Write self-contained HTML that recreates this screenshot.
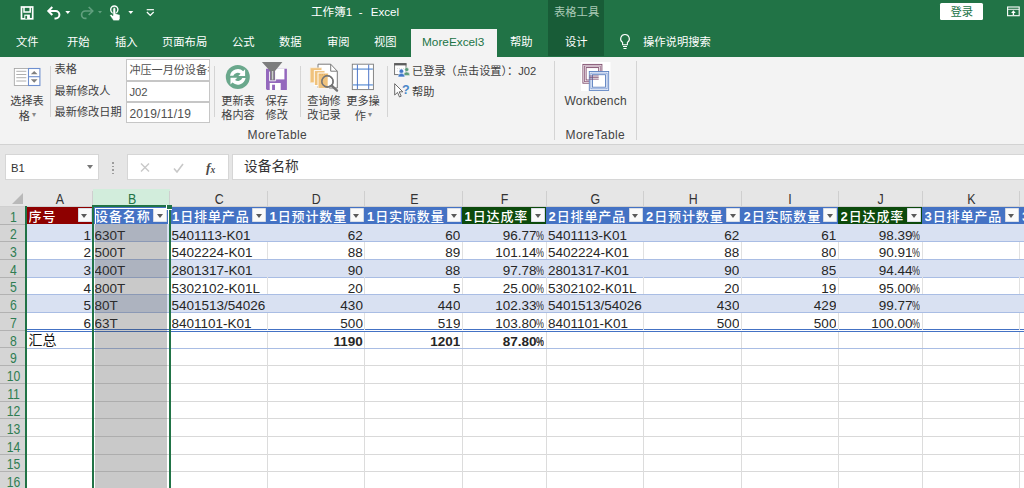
<!DOCTYPE html><html lang="zh-CN"><head><meta charset="utf-8"><title>工作簿1 - Excel</title><style>
*{box-sizing:border-box;margin:0;padding:0}
html,body{width:1024px;height:488px;overflow:hidden;background:#e6e6e6}
body{position:relative;font-family:"Liberation Sans","Noto Sans CJK SC",sans-serif;font-size:12px;color:#262626}
.abs{position:absolute}
.t{position:absolute;white-space:nowrap;line-height:1}
#title{left:0;top:0;width:1024px;height:56.5px;background:#217346}
.tab{position:absolute;top:34.5px;color:#fff;font-size:11.3px;line-height:14px;white-space:nowrap}
#ribbon{left:0;top:56.5px;width:1024px;height:88.4px;background:#f3f3f3;border-bottom:1px solid #d2d2d2}
.rl{position:absolute;font-size:11.2px;line-height:13px;white-space:nowrap;color:#404040}
.inp{position:absolute;left:126.4px;width:83.4px;height:21.8px;background:#fff;border:1px solid #c6c6c6;font-size:11.1px;line-height:20px;padding-left:2px;white-space:nowrap;overflow:hidden;color:#505050}
.sep{position:absolute;width:1px;background:#d4d4d4}
.cell{position:absolute;white-space:nowrap;overflow:hidden;font-family:"Liberation Sans","Noto Sans CJK SC",sans-serif;font-size:13.5px;line-height:17.7px;color:#262626;height:17.7px;letter-spacing:0}
.hdr{color:#fff;font-weight:500;font-size:13px;letter-spacing:0.9px}
.hdr b{font-weight:700}
.cj{font-size:14px}
.pc{display:inline-block;transform:scaleX(0.66);transform-origin:100% 50%;margin-left:-4.2px;letter-spacing:0}
.ch{position:absolute;top:189px;height:17.5px;text-align:center;font-size:14.4px;line-height:21.4px;transform:scaleX(0.86);padding-left:1.4px;color:#333;font-family:"Liberation Sans",sans-serif}
.rn{position:absolute;left:0.8px;width:25px;letter-spacing:0;transform:scaleX(0.86);text-align:center;font-size:14.2px;line-height:17.7px;padding-top:2.4px;color:#2f7d52;font-family:"Liberation Sans",sans-serif;height:17.7px}
.fb{position:absolute;width:14px;height:14px;background:#fafafa;box-shadow:inset 0 0 0 0.6px #b9c3d6}
.fb:after{content:"";position:absolute;left:3.5px;top:5.5px;width:0;height:0;box-sizing:content-box;border-left:3.5px solid transparent;border-right:3.5px solid transparent;border-top:4px solid #5a5a5a}
</style></head><body>
<div id="title" class="abs"></div>
<div class="abs" style="left:548px;top:0;width:56px;height:56px;background:#185c37"></div>
<div class="t" style="left:311px;top:4.6px;color:#fff;font-size:11.6px;line-height:14px">工作簿1&nbsp; -&nbsp;&nbsp;<span style="letter-spacing:0;margin-left:1.8px">Excel</span></div>
<div class="t" style="left:554px;top:4.6px;color:#a9cab6;font-size:11.3px;line-height:14px">表格工具</div>
<div class="abs" style="left:940.4px;top:2.9px;width:42.7px;height:17.3px;border-radius:1.5px;background:#fff;color:#217346;font-size:11.3px;line-height:18.6px;text-align:center">登录</div>
<svg class="abs" style="left:0;top:0" width="170" height="28" viewBox="0 0 170 28">
<g fill="none" stroke="#fff">
<rect x="21.500" y="7" width="11.200" height="11.800" stroke-width="1.700"/>
<path d="M24 7 v5 h6.200 v-5" stroke-width="1.500"/>
<rect x="24.300" y="14.600" width="5.600" height="4.200" fill="#fff" stroke="none"/>
<rect x="25.300" y="15.800" width="1.800" height="3" fill="#217346" stroke="none"/>
<path d="M48.500 11 h7.200 a3.700 3.700 0 0 1 0 7.400 h-1.200" stroke-width="2"/>
<path d="M52.300 7 l-4 4 4 4" stroke-width="2"/>
</g>
<path d="M65.300 11 h5 l-2.500 3z" fill="#fff"/>
<g fill="none" stroke="#62a07f" stroke-width="1.700">
<path d="M92.300 11 h-7 a3.700 3.700 0 0 0 0 7.400 h1.200"/>
<path d="M88.700 7 l4 4 -4 4"/>
</g>
<path d="M98 11 h4 l-2 2.500z" fill="#62a07f"/>
<g fill="#fff">
<circle cx="114.300" cy="9.600" r="3.600" fill="none" stroke="#fff" stroke-width="1.400"/>
<path d="M112.900 9 a1.400 1.400 0 0 1 2.800 0 v4.500 l4.300 1.200 v4 l-1 2 h-5.500 l-3.800 -5.300 1.400 -1.200 1.800 1.500z" stroke="#217346" stroke-width="0.600"/>
<path d="M128.300 11 h5 l-2.500 3z"/>
</g>
<path d="M146.700 9.700 h7.200" stroke="#fff" stroke-width="1.200"/>
<path d="M146.900 12 l3.400 3.400 3.400 -3.400" stroke="#fff" stroke-width="1.300" fill="none"/>
</svg>
<svg class="abs" style="left:1004px;top:4px" width="20" height="16" viewBox="0 0 20 16"><rect x="3.600" y="3" width="11.600" height="8.700" fill="none" stroke="#fff" stroke-width="1.100"/><path d="M3.600 5.300 h11.600" stroke="#fff" stroke-width="0.900"/><path d="M9.400 6.300 l-2.300 2.600 h1.600 v2 h1.400 v-2 h1.600z" fill="#fff"/></svg>
<div class="tab" style="left:16px">文件</div>
<div class="tab" style="left:67px">开始</div>
<div class="tab" style="left:115px">插入</div>
<div class="tab" style="left:162px">页面布局</div>
<div class="tab" style="left:232px">公式</div>
<div class="tab" style="left:279px">数据</div>
<div class="tab" style="left:327px">审阅</div>
<div class="tab" style="left:374px">视图</div>
<div class="abs" style="left:411px;top:29px;width:86.2px;height:28px;background:#f3f3f3"></div>
<div class="tab" style="left:422px;color:#217346;font-size:11.8px;letter-spacing:0">MoreExcel3</div>
<div class="tab" style="left:510px">帮助</div>
<div class="tab" style="left:565px">设计</div>
<div class="tab" style="left:643px">操作说明搜索</div>
<svg class="abs" style="left:618px;top:33px" width="14" height="18" viewBox="0 0 14 18"><path d="M7 1.5 a4.3 4.3 0 0 0 -2.4 7.9 v2.4 h4.8 v-2.4 a4.3 4.3 0 0 0 -2.4 -7.9z" fill="none" stroke="#fff" stroke-width="1.1"/><path d="M5 13.5 h4 M5.5 15.5 h3" stroke="#fff" stroke-width="1.1"/></svg>
<div id="ribbon" class="abs"></div>
<svg class="abs" style="left:12px;top:64px" width="32" height="28" viewBox="0 0 32 28">
<rect x="2.300" y="4.500" width="14.200" height="17" fill="#fff" stroke="#a0a0a0" stroke-width="0.800"/>
<path d="M4.300 7.300 h10 M4.300 10.500 h10 M4.300 13.700 h10 M4.300 17 h10" stroke="#9a9a9a" stroke-width="0.800"/>
<rect x="16.500" y="4.500" width="11.400" height="17" fill="#fff" stroke="#6e8fcf" stroke-width="1.100"/>
<path d="M16.500 12.700 h11.400" stroke="#6e8fcf" stroke-width="1.100"/>
<path d="M18.800 10.300 l3.400 -3.400 3.400 3.400z M18.800 15.300 l3.400 3.400 3.400 -3.400z" fill="#808080"/>
</svg>
<div class="rl" style="left:8px;top:93.6px;width:38px;text-align:center;line-height:14px">选择表<br>格<span style="font-size:8px;color:#888;vertical-align:2.5px;margin-right:-1px">&nbsp;&#9662;</span></div>
<div class="sep" style="left:50px;top:66px;height:51px"></div>
<div class="rl" style="left:54.5px;top:62.8px">表格</div>
<div class="rl" style="left:54.5px;top:85px">最新修改人</div>
<div class="rl" style="left:54.5px;top:106px">最新修改日期</div>
<div class="inp" style="top:59.3px">冲压一月份设备名</div>
<div class="inp" style="top:80.5px;font-size:11.3px">J02</div>
<div class="inp" style="top:101.7px;font-size:12px;letter-spacing:0.25px;line-height:22px">2019/11/19</div>
<div class="sep" style="left:214px;top:66px;height:51px"></div>
<svg class="abs" style="left:224px;top:62px" width="28" height="30" viewBox="0 0 28 30">
<circle cx="13.800" cy="14.900" r="12" fill="#6aa88c"/>
<path d="M6 13.800 a8 8 0 0 1 13.200 -4.600 l1.900 -1.900 v6.800 h-6.800 l2.300 -2.300 a4.700 4.700 0 0 0 -7.300 2z" fill="#fff"/>
<path d="M21.600 16 a8 8 0 0 1 -13.200 4.600 l-1.900 1.900 v-6.800 h6.800 l-2.300 2.300 a4.700 4.700 0 0 0 7.300 -2z" fill="#fff"/>
</svg>
<div class="rl" style="left:216px;top:93.9px;width:44px;text-align:center;line-height:14px">更新表<br>格内容</div>
<svg class="abs" style="left:260px;top:60px" width="30" height="32" viewBox="0 0 30 32">
<path d="M6 8.700 h20.900 v21.300 h-19.900 l-1 -1z" fill="#9468bd"/>
<rect x="15" y="8.700" width="9.400" height="10.700" fill="#fff"/>
<rect x="9.700" y="23" width="11" height="7" fill="#fff"/>
<rect x="12.100" y="24.700" width="2.900" height="5.300" fill="#9468bd"/>
<path d="M1.900 2.100 h20.500 l-7.800 9.500 v8.600 h-4.100 v-8.600z" fill="#7d7d7d"/>
<path d="M12.550 11 v8.600" stroke="#cfcfcf" stroke-width="1.400"/>
<path d="M9.500 11.600 v9.200 h6.100 v-9.200" fill="none" stroke="#f3f3f3" stroke-width="0.900"/>
</svg>
<div class="rl" style="left:260.7px;top:93.9px;width:32px;text-align:center;line-height:14px">保存<br>修改</div>
<div class="sep" style="left:300px;top:66px;height:51px"></div>
<svg class="abs" style="left:306px;top:61px" width="36" height="32" viewBox="0 0 36 32">
<path d="M12 3.200 h12.700 l6.600 7 v16.800 h-19.300z" fill="#fff" stroke="#7a7a7a" stroke-width="1"/>
<path d="M24.700 3.200 v7 h6.600" fill="none" stroke="#7a7a7a" stroke-width="1"/>
<rect x="4.200" y="6.900" width="11.500" height="14.700" fill="#f0c27c" stroke="#fbe9cd" stroke-width="0.600"/>
<rect x="8.300" y="9.600" width="10.700" height="14.900" fill="#f0c27c" stroke="#fff" stroke-width="0.900"/>
<rect x="12" y="12" width="10.700" height="15.400" fill="#f0c27c" stroke="#fff" stroke-width="0.900"/>
<path d="M13.500 13.800 h8" stroke="#d9a457" stroke-width="0.900" stroke-dasharray="1.200 1"/>
<circle cx="21.500" cy="20.400" r="5.600" fill="#fff" stroke="#757575" stroke-width="1.400"/>
<path d="M18.700 15.900 a5 5 0 0 0 0 9 h3 v-9.500z" fill="#f0c27c"/>
<circle cx="21.500" cy="20.400" r="5.600" fill="none" stroke="#757575" stroke-width="1.400"/>
<path d="M26 24.900 l5 4.700" stroke="#757575" stroke-width="2.400" stroke-linecap="round"/>
</svg>
<div class="rl" style="left:302px;top:93.9px;width:44px;text-align:center;line-height:14px">查询修<br>改记录</div>
<svg class="abs" style="left:349px;top:61px" width="28" height="32" viewBox="0 0 28 32">
<rect x="3.300" y="3.200" width="21.100" height="25.400" fill="#fff" stroke="#7a7a7a" stroke-width="0.900"/>
<path d="M3.800 8.100 h20.100 M3.800 23.850 h20.100" stroke="#8fb2e2" stroke-width="1.700" fill="none"/>
<path d="M8.400 3.700 v24.400 M19.700 3.700 v24.400" stroke="#4d76c8" stroke-width="1" fill="none"/>
</svg>
<div class="rl" style="left:342px;top:93.9px;width:42px;text-align:center;line-height:14px">更多操<br>作<span style="font-size:8px;color:#888;vertical-align:2.5px;margin-right:-1px">&nbsp;&#9662;</span></div>
<div class="sep" style="left:387px;top:66px;height:51px"></div>
<div class="rl" style="left:247.5px;top:128.5px;font-size:12px;letter-spacing:0.4px;color:#444">MoreTable</div>
<svg class="abs" style="left:393px;top:62px" width="18" height="16" viewBox="0 0 18 16">
<rect x="1.600" y="1.600" width="11.400" height="11" fill="#fff" stroke="#6a6a6a" stroke-width="0.900"/>
<rect x="1.200" y="1.200" width="12.200" height="2.200" fill="#5c5c5c"/>
<path d="M4 6.500 h7 M4 9 h3" stroke="#d8d8d8" stroke-width="0.800" stroke-dasharray="1 1"/>
<circle cx="13.700" cy="7.600" r="2" fill="#5a9b78" stroke="#f3f3f3" stroke-width="0.500"/><path d="M10.600 13.400 a3.100 3.400 0 0 1 6.200 0z" fill="#5a9b78" stroke="#f3f3f3" stroke-width="0.500"/>
<circle cx="8.400" cy="9.200" r="2.200" fill="#3f78c8" stroke="#fff" stroke-width="0.500"/><path d="M5 14.900 a3.400 3.600 0 0 1 6.800 0z" fill="#3f78c8" stroke="#fff" stroke-width="0.500"/>
</svg>
<div class="rl" style="left:412px;top:64.5px">已登录（点击设置）：J02</div>
<svg class="abs" style="left:393px;top:81px" width="18" height="18" viewBox="0 0 18 18">
<path d="M1.700 2.700 v11.300 l2.800 -2.600 2 4.600 1.700 -0.800 -2 -4.400 h3.600z" fill="#fff" stroke="#5a5a5a" stroke-width="0.900" stroke-linejoin="round"/>
<text x="9" y="12.800" font-family="Liberation Sans,sans-serif" font-weight="bold" font-size="12.500" fill="#4a86c8">?</text>
</svg>
<div class="rl" style="left:412px;top:86px">帮助</div>
<div class="sep" style="left:554px;top:61px;height:79px"></div>
<svg class="abs" style="left:581px;top:61.500px" width="29.500" height="29.500" viewBox="0 0 29.5 29.5">
<rect width="29.500" height="29.500" fill="#fff"/>
<g fill="none" stroke-width="0.900">
<rect x="1.900" y="2.400" width="19" height="18.800" stroke="#7d4a6a"/>
<rect x="3.500" y="4" width="15.800" height="15.600" stroke="#9a6a88"/>
<rect x="5.100" y="5.600" width="12.600" height="12.400" stroke="#7d4a6a"/>
<rect x="8.300" y="9.500" width="19.400" height="18.900" stroke="#5a7fc0" fill="#fff"/>
<rect x="9.900" y="11.100" width="16.200" height="15.700" stroke="#7a9ad6"/>
<rect x="11.500" y="12.700" width="13" height="12.500" stroke="#5a7fc0"/>
<path d="M8.300 14 h9.400 M8.300 15.600 h9.400 M8.300 17.200 h9.400" stroke="#7d4a6a" stroke-width="0.800"/>
</g></svg>
<div class="rl" style="left:564.5px;top:95px;font-size:12px;letter-spacing:0.2px;color:#444">Workbench</div>
<div class="rl" style="left:565.5px;top:128.5px;font-size:12px;letter-spacing:0.4px;color:#444">MoreTable</div>
<div class="sep" style="left:636px;top:61px;height:79px"></div>
<div class="abs" style="left:5px;top:154px;width:94px;height:26px;background:#fff;border:1px solid #d6d6d6"></div>
<div class="t" style="left:11px;top:162.5px;font-size:11.3px;color:#333">B1</div>
<div class="abs" style="left:87px;top:165px;border-left:3.5px solid transparent;border-right:3.5px solid transparent;border-top:4px solid #777"></div>
<div class="abs" style="left:112.3px;top:161.5px;width:1.6px;height:12px;background:repeating-linear-gradient(#9c9c9c 0 1.5px,transparent 1.5px 3.5px)"></div>
<div class="abs" style="left:127px;top:154px;width:102px;height:26px;background:#fff;border:1px solid #d6d6d6"></div>
<svg class="abs" style="left:127px;top:154px" width="102" height="26" viewBox="0 0 102 26">
<path d="M14 9.5 l8 8 M22 9.5 l-8 8" stroke="#c8c8c8" stroke-width="1.4" fill="none"/>
<path d="M47 14.5 l3 3.5 6-8" stroke="#c8c8c8" stroke-width="1.6" fill="none"/>
<text x="79" y="18" font-family="Liberation Serif,serif" font-style="italic" font-size="13.500" font-weight="bold" fill="#4a4a4a">f</text>
<text x="83.500" y="18.500" font-family="Liberation Serif,serif" font-style="italic" font-size="9.500" font-weight="bold" fill="#4a4a4a">x</text>
</svg>
<div class="abs" style="left:232px;top:154px;width:800px;height:26px;background:#fff;border:1px solid #d6d6d6"></div>
<div class="t" style="left:244px;top:160px;font-size:13.7px;color:#333;line-height:14px">设备名称</div>
<div class="abs" style="left:0;top:189px;width:1024px;height:300px;background:#fff"></div>
<div class="abs" style="left:0;top:189px;width:1024px;height:17.3px;background:#e6e6e6"></div>
<div class="abs" style="left:0;top:189px;width:26px;height:300px;background:#e6e6e6"></div>
<div class="abs" style="left:0;top:206.5px;width:26px;height:300px;background:#d5d5d5"></div>
<div class="abs" style="left:92.5px;top:189px;width:77px;height:17.3px;background:#d2eddc"></div>
<div class="abs" style="left:11.5px;top:193px;width:0;height:0;border-left:11px solid transparent;border-bottom:11px solid #b9b9b9"></div>
<div class="ch" style="left:26px;width:66.5px;color:#333">A</div>
<div class="abs" style="left:92.0px;top:191px;width:1px;height:15px;background:#cfcfcf"></div>
<div class="ch" style="left:92.5px;width:77.0px;color:#217346">B</div>
<div class="abs" style="left:169.0px;top:191px;width:1px;height:15px;background:#cfcfcf"></div>
<div class="ch" style="left:169.5px;width:97.5px;color:#333">C</div>
<div class="abs" style="left:266.5px;top:191px;width:1px;height:15px;background:#cfcfcf"></div>
<div class="ch" style="left:267px;width:97.5px;color:#333">D</div>
<div class="abs" style="left:364.0px;top:191px;width:1px;height:15px;background:#cfcfcf"></div>
<div class="ch" style="left:364.5px;width:97.5px;color:#333">E</div>
<div class="abs" style="left:461.5px;top:191px;width:1px;height:15px;background:#cfcfcf"></div>
<div class="ch" style="left:462px;width:84px;color:#333">F</div>
<div class="abs" style="left:545.5px;top:191px;width:1px;height:15px;background:#cfcfcf"></div>
<div class="ch" style="left:546px;width:97.5px;color:#333">G</div>
<div class="abs" style="left:643.0px;top:191px;width:1px;height:15px;background:#cfcfcf"></div>
<div class="ch" style="left:643.5px;width:97.5px;color:#333">H</div>
<div class="abs" style="left:740.5px;top:191px;width:1px;height:15px;background:#cfcfcf"></div>
<div class="ch" style="left:741px;width:97px;color:#333">I</div>
<div class="abs" style="left:837.5px;top:191px;width:1px;height:15px;background:#cfcfcf"></div>
<div class="ch" style="left:838px;width:84px;color:#333">J</div>
<div class="abs" style="left:921.5px;top:191px;width:1px;height:15px;background:#cfcfcf"></div>
<div class="ch" style="left:922px;width:97.5px;color:#333">K</div>
<div class="abs" style="left:1019.0px;top:191px;width:1px;height:15px;background:#cfcfcf"></div>
<div class="abs" style="left:1029.5px;top:191px;width:1px;height:15px;background:#cfcfcf"></div>
<div class="rn" style="top:206.30px">1</div>
<div class="abs" style="left:0;top:223.50px;width:26px;height:1px;background:#b2b2b2"></div>
<div class="rn" style="top:224.00px">2</div>
<div class="abs" style="left:0;top:241.20px;width:26px;height:1px;background:#b2b2b2"></div>
<div class="rn" style="top:241.70px">3</div>
<div class="abs" style="left:0;top:258.90px;width:26px;height:1px;background:#b2b2b2"></div>
<div class="rn" style="top:259.40px">4</div>
<div class="abs" style="left:0;top:276.60px;width:26px;height:1px;background:#b2b2b2"></div>
<div class="rn" style="top:277.10px">5</div>
<div class="abs" style="left:0;top:294.30px;width:26px;height:1px;background:#b2b2b2"></div>
<div class="rn" style="top:294.80px">6</div>
<div class="abs" style="left:0;top:312.00px;width:26px;height:1px;background:#b2b2b2"></div>
<div class="rn" style="top:312.50px">7</div>
<div class="abs" style="left:0;top:329.70px;width:26px;height:1px;background:#b2b2b2"></div>
<div class="rn" style="top:330.20px">8</div>
<div class="abs" style="left:0;top:347.40px;width:26px;height:1px;background:#b2b2b2"></div>
<div class="rn" style="top:347.90px">9</div>
<div class="abs" style="left:0;top:365.10px;width:26px;height:1px;background:#b2b2b2"></div>
<div class="abs" style="left:26px;top:365.10px;width:998px;height:1px;background:#d9d9d9"></div>
<div class="rn" style="top:365.60px">10</div>
<div class="abs" style="left:0;top:382.80px;width:26px;height:1px;background:#b2b2b2"></div>
<div class="abs" style="left:26px;top:382.80px;width:998px;height:1px;background:#d9d9d9"></div>
<div class="rn" style="top:383.30px">11</div>
<div class="abs" style="left:0;top:400.50px;width:26px;height:1px;background:#b2b2b2"></div>
<div class="abs" style="left:26px;top:400.50px;width:998px;height:1px;background:#d9d9d9"></div>
<div class="rn" style="top:401.00px">12</div>
<div class="abs" style="left:0;top:418.20px;width:26px;height:1px;background:#b2b2b2"></div>
<div class="abs" style="left:26px;top:418.20px;width:998px;height:1px;background:#d9d9d9"></div>
<div class="rn" style="top:418.70px">13</div>
<div class="abs" style="left:0;top:435.90px;width:26px;height:1px;background:#b2b2b2"></div>
<div class="abs" style="left:26px;top:435.90px;width:998px;height:1px;background:#d9d9d9"></div>
<div class="rn" style="top:436.40px">14</div>
<div class="abs" style="left:0;top:453.60px;width:26px;height:1px;background:#b2b2b2"></div>
<div class="abs" style="left:26px;top:453.60px;width:998px;height:1px;background:#d9d9d9"></div>
<div class="rn" style="top:454.10px">15</div>
<div class="abs" style="left:0;top:471.30px;width:26px;height:1px;background:#b2b2b2"></div>
<div class="abs" style="left:26px;top:471.30px;width:998px;height:1px;background:#d9d9d9"></div>
<div class="rn" style="top:471.80px">16</div>
<div class="abs" style="left:0;top:489.00px;width:26px;height:1px;background:#b2b2b2"></div>
<div class="abs" style="left:26px;top:489.00px;width:998px;height:1px;background:#d9d9d9"></div>
<div class="rn" style="top:489.50px">17</div>
<div class="abs" style="left:0;top:506.70px;width:26px;height:1px;background:#b2b2b2"></div>
<div class="abs" style="left:26px;top:506.70px;width:998px;height:1px;background:#d9d9d9"></div>
<div class="abs" style="left:92.0px;top:330.20px;width:1px;height:160px;background:#dcdcdc"></div>
<div class="abs" style="left:169.0px;top:330.20px;width:1px;height:160px;background:#dcdcdc"></div>
<div class="abs" style="left:266.5px;top:330.20px;width:1px;height:160px;background:#dcdcdc"></div>
<div class="abs" style="left:364.0px;top:330.20px;width:1px;height:160px;background:#dcdcdc"></div>
<div class="abs" style="left:461.5px;top:330.20px;width:1px;height:160px;background:#dcdcdc"></div>
<div class="abs" style="left:545.5px;top:330.20px;width:1px;height:160px;background:#dcdcdc"></div>
<div class="abs" style="left:643.0px;top:330.20px;width:1px;height:160px;background:#dcdcdc"></div>
<div class="abs" style="left:740.5px;top:330.20px;width:1px;height:160px;background:#dcdcdc"></div>
<div class="abs" style="left:837.5px;top:330.20px;width:1px;height:160px;background:#dcdcdc"></div>
<div class="abs" style="left:921.5px;top:330.20px;width:1px;height:160px;background:#dcdcdc"></div>
<div class="abs" style="left:1019.0px;top:330.20px;width:1px;height:160px;background:#dcdcdc"></div>
<div class="abs" style="left:1029.5px;top:330.20px;width:1px;height:160px;background:#dcdcdc"></div>
<div class="abs" style="left:0;top:206px;width:1024px;height:1px;background:#d0d0d0"></div>
<div class="abs" style="left:26px;top:207.0px;width:66.5px;height:17.0px;background:#8e0000"></div>
<div class="cell hdr" style="left:28.5px;top:207.8px;width:64.5px">序号</div>
<div class="fb" style="left:77.5px;top:208.10000000000002px"></div>
<div class="abs" style="left:92.5px;top:207.0px;width:77.0px;height:17.0px;background:#4472c4"></div>
<div class="cell hdr" style="left:95.0px;top:207.8px;width:75.0px">设备名称</div>
<div class="fb" style="left:153.3px;top:208.10000000000002px"></div>
<div class="abs" style="left:169.5px;top:207.0px;width:97.5px;height:17.0px;background:#4472c4"></div>
<div class="cell hdr" style="left:172.0px;top:207.8px;width:95.5px"><b>1</b>日排单产品</div>
<div class="fb" style="left:252px;top:208.10000000000002px"></div>
<div class="abs" style="left:267px;top:207.0px;width:97.5px;height:17.0px;background:#4472c4"></div>
<div class="cell hdr" style="left:269.5px;top:207.8px;width:95.5px"><b>1</b>日预计数量</div>
<div class="fb" style="left:349.5px;top:208.10000000000002px"></div>
<div class="abs" style="left:364.5px;top:207.0px;width:97.5px;height:17.0px;background:#4472c4"></div>
<div class="cell hdr" style="left:367.0px;top:207.8px;width:95.5px"><b>1</b>日实际数量</div>
<div class="fb" style="left:447px;top:208.10000000000002px"></div>
<div class="abs" style="left:462px;top:207.0px;width:84px;height:17.0px;background:#0c4a0c"></div>
<div class="cell hdr" style="left:464.5px;top:207.8px;width:82px"><b>1</b>日达成率</div>
<div class="fb" style="left:531px;top:208.10000000000002px"></div>
<div class="abs" style="left:546px;top:207.0px;width:97.5px;height:17.0px;background:#4472c4"></div>
<div class="cell hdr" style="left:548.5px;top:207.8px;width:95.5px"><b>2</b>日排单产品</div>
<div class="fb" style="left:628.5px;top:208.10000000000002px"></div>
<div class="abs" style="left:643.5px;top:207.0px;width:97.5px;height:17.0px;background:#4472c4"></div>
<div class="cell hdr" style="left:646.0px;top:207.8px;width:95.5px"><b>2</b>日预计数量</div>
<div class="fb" style="left:726px;top:208.10000000000002px"></div>
<div class="abs" style="left:741px;top:207.0px;width:97px;height:17.0px;background:#4472c4"></div>
<div class="cell hdr" style="left:743.5px;top:207.8px;width:95px"><b>2</b>日实际数量</div>
<div class="fb" style="left:823px;top:208.10000000000002px"></div>
<div class="abs" style="left:838px;top:207.0px;width:84px;height:17.0px;background:#0c4a0c"></div>
<div class="cell hdr" style="left:840.5px;top:207.8px;width:82px"><b>2</b>日达成率</div>
<div class="fb" style="left:907px;top:208.10000000000002px"></div>
<div class="abs" style="left:922px;top:207.0px;width:97.5px;height:17.0px;background:#4472c4"></div>
<div class="cell hdr" style="left:924.5px;top:207.8px;width:95.5px"><b>3</b>日排单产品</div>
<div class="fb" style="left:1004.5px;top:208.10000000000002px"></div>
<div class="abs" style="left:1019.5px;top:207.0px;width:10.5px;height:17.0px;background:#4472c4"></div>
<div class="cell hdr" style="left:1022.0px;top:207.8px;width:8.5px"><b>3</b></div>
<div class="abs" style="left:26px;top:223.70px;width:998px;height:18.0px;background:#d9e1f2"></div>
<div class="abs" style="left:26px;top:259.10px;width:998px;height:18.0px;background:#d9e1f2"></div>
<div class="abs" style="left:26px;top:294.50px;width:998px;height:18.0px;background:#d9e1f2"></div>
<div class="abs" style="left:26px;top:241.30px;width:998px;height:1px;background:#a9bde4"></div>
<div class="abs" style="left:26px;top:259.00px;width:998px;height:1px;background:#a9bde4"></div>
<div class="abs" style="left:26px;top:276.70px;width:998px;height:1px;background:#a9bde4"></div>
<div class="abs" style="left:26px;top:294.40px;width:998px;height:1px;background:#a9bde4"></div>
<div class="abs" style="left:26px;top:312.10px;width:998px;height:1px;background:#a9bde4"></div>
<div class="abs" style="left:26px;top:329.00px;width:998px;height:3px;border-top:1px solid #4472c4;border-bottom:1px solid #4472c4;background:#fff"></div>
<div class="abs" style="left:26px;top:347.70px;width:998px;height:1.3px;background:#a9bde4"></div>
<div class="abs" style="left:92.0px;top:241.70px;width:1px;height:17.2px;background:#e1e1e1"></div>
<div class="abs" style="left:169.0px;top:241.70px;width:1px;height:17.2px;background:#e1e1e1"></div>
<div class="abs" style="left:266.5px;top:241.70px;width:1px;height:17.2px;background:#e1e1e1"></div>
<div class="abs" style="left:364.0px;top:241.70px;width:1px;height:17.2px;background:#e1e1e1"></div>
<div class="abs" style="left:461.5px;top:241.70px;width:1px;height:17.2px;background:#e1e1e1"></div>
<div class="abs" style="left:545.5px;top:241.70px;width:1px;height:17.2px;background:#e1e1e1"></div>
<div class="abs" style="left:643.0px;top:241.70px;width:1px;height:17.2px;background:#e1e1e1"></div>
<div class="abs" style="left:740.5px;top:241.70px;width:1px;height:17.2px;background:#e1e1e1"></div>
<div class="abs" style="left:837.5px;top:241.70px;width:1px;height:17.2px;background:#e1e1e1"></div>
<div class="abs" style="left:921.5px;top:241.70px;width:1px;height:17.2px;background:#e1e1e1"></div>
<div class="abs" style="left:1019.0px;top:241.70px;width:1px;height:17.2px;background:#e1e1e1"></div>
<div class="abs" style="left:1029.5px;top:241.70px;width:1px;height:17.2px;background:#e1e1e1"></div>
<div class="abs" style="left:92.0px;top:277.10px;width:1px;height:17.2px;background:#e1e1e1"></div>
<div class="abs" style="left:169.0px;top:277.10px;width:1px;height:17.2px;background:#e1e1e1"></div>
<div class="abs" style="left:266.5px;top:277.10px;width:1px;height:17.2px;background:#e1e1e1"></div>
<div class="abs" style="left:364.0px;top:277.10px;width:1px;height:17.2px;background:#e1e1e1"></div>
<div class="abs" style="left:461.5px;top:277.10px;width:1px;height:17.2px;background:#e1e1e1"></div>
<div class="abs" style="left:545.5px;top:277.10px;width:1px;height:17.2px;background:#e1e1e1"></div>
<div class="abs" style="left:643.0px;top:277.10px;width:1px;height:17.2px;background:#e1e1e1"></div>
<div class="abs" style="left:740.5px;top:277.10px;width:1px;height:17.2px;background:#e1e1e1"></div>
<div class="abs" style="left:837.5px;top:277.10px;width:1px;height:17.2px;background:#e1e1e1"></div>
<div class="abs" style="left:921.5px;top:277.10px;width:1px;height:17.2px;background:#e1e1e1"></div>
<div class="abs" style="left:1019.0px;top:277.10px;width:1px;height:17.2px;background:#e1e1e1"></div>
<div class="abs" style="left:1029.5px;top:277.10px;width:1px;height:17.2px;background:#e1e1e1"></div>
<div class="abs" style="left:92.0px;top:312.50px;width:1px;height:17.2px;background:#e1e1e1"></div>
<div class="abs" style="left:169.0px;top:312.50px;width:1px;height:17.2px;background:#e1e1e1"></div>
<div class="abs" style="left:266.5px;top:312.50px;width:1px;height:17.2px;background:#e1e1e1"></div>
<div class="abs" style="left:364.0px;top:312.50px;width:1px;height:17.2px;background:#e1e1e1"></div>
<div class="abs" style="left:461.5px;top:312.50px;width:1px;height:17.2px;background:#e1e1e1"></div>
<div class="abs" style="left:545.5px;top:312.50px;width:1px;height:17.2px;background:#e1e1e1"></div>
<div class="abs" style="left:643.0px;top:312.50px;width:1px;height:17.2px;background:#e1e1e1"></div>
<div class="abs" style="left:740.5px;top:312.50px;width:1px;height:17.2px;background:#e1e1e1"></div>
<div class="abs" style="left:837.5px;top:312.50px;width:1px;height:17.2px;background:#e1e1e1"></div>
<div class="abs" style="left:921.5px;top:312.50px;width:1px;height:17.2px;background:#e1e1e1"></div>
<div class="abs" style="left:1019.0px;top:312.50px;width:1px;height:17.2px;background:#e1e1e1"></div>
<div class="abs" style="left:1029.5px;top:312.50px;width:1px;height:17.2px;background:#e1e1e1"></div>
<div class="cell" style="left:26px;top:226.50px;width:64.9px;text-align:right">1</div>
<div class="cell" style="left:94.5px;top:226.50px;width:75.0px">630T</div>
<div class="cell" style="left:171.5px;top:226.50px;width:137.5px">5401113-K01</div>
<div class="cell" style="left:267px;top:226.50px;width:95.9px;text-align:right">62</div>
<div class="cell" style="left:364.5px;top:226.50px;width:95.9px;text-align:right">60</div>
<div class="cell" style="left:462px;top:226.50px;width:82.4px;text-align:right">96.77<span class="pc">%</span></div>
<div class="cell" style="left:548px;top:226.50px;width:95.5px">5401113-K01</div>
<div class="cell" style="left:643.5px;top:226.50px;width:95.9px;text-align:right">62</div>
<div class="cell" style="left:741px;top:226.50px;width:95.4px;text-align:right">61</div>
<div class="cell" style="left:838px;top:226.50px;width:82.4px;text-align:right">98.39<span class="pc">%</span></div>
<div class="cell" style="left:26px;top:244.20px;width:64.9px;text-align:right">2</div>
<div class="cell" style="left:94.5px;top:244.20px;width:75.0px">500T</div>
<div class="cell" style="left:171.5px;top:244.20px;width:137.5px">5402224-K01</div>
<div class="cell" style="left:267px;top:244.20px;width:95.9px;text-align:right">88</div>
<div class="cell" style="left:364.5px;top:244.20px;width:95.9px;text-align:right">89</div>
<div class="cell" style="left:462px;top:244.20px;width:82.4px;text-align:right">101.14<span class="pc">%</span></div>
<div class="cell" style="left:548px;top:244.20px;width:95.5px">5402224-K01</div>
<div class="cell" style="left:643.5px;top:244.20px;width:95.9px;text-align:right">88</div>
<div class="cell" style="left:741px;top:244.20px;width:95.4px;text-align:right">80</div>
<div class="cell" style="left:838px;top:244.20px;width:82.4px;text-align:right">90.91<span class="pc">%</span></div>
<div class="cell" style="left:26px;top:261.90px;width:64.9px;text-align:right">3</div>
<div class="cell" style="left:94.5px;top:261.90px;width:75.0px">400T</div>
<div class="cell" style="left:171.5px;top:261.90px;width:137.5px">2801317-K01</div>
<div class="cell" style="left:267px;top:261.90px;width:95.9px;text-align:right">90</div>
<div class="cell" style="left:364.5px;top:261.90px;width:95.9px;text-align:right">88</div>
<div class="cell" style="left:462px;top:261.90px;width:82.4px;text-align:right">97.78<span class="pc">%</span></div>
<div class="cell" style="left:548px;top:261.90px;width:95.5px">2801317-K01</div>
<div class="cell" style="left:643.5px;top:261.90px;width:95.9px;text-align:right">90</div>
<div class="cell" style="left:741px;top:261.90px;width:95.4px;text-align:right">85</div>
<div class="cell" style="left:838px;top:261.90px;width:82.4px;text-align:right">94.44<span class="pc">%</span></div>
<div class="cell" style="left:26px;top:279.60px;width:64.9px;text-align:right">4</div>
<div class="cell" style="left:94.5px;top:279.60px;width:75.0px">800T</div>
<div class="cell" style="left:171.5px;top:279.60px;width:137.5px">5302102-K01L</div>
<div class="cell" style="left:267px;top:279.60px;width:95.9px;text-align:right">20</div>
<div class="cell" style="left:364.5px;top:279.60px;width:95.9px;text-align:right">5</div>
<div class="cell" style="left:462px;top:279.60px;width:82.4px;text-align:right">25.00<span class="pc">%</span></div>
<div class="cell" style="left:548px;top:279.60px;width:95.5px">5302102-K01L</div>
<div class="cell" style="left:643.5px;top:279.60px;width:95.9px;text-align:right">20</div>
<div class="cell" style="left:741px;top:279.60px;width:95.4px;text-align:right">19</div>
<div class="cell" style="left:838px;top:279.60px;width:82.4px;text-align:right">95.00<span class="pc">%</span></div>
<div class="cell" style="left:26px;top:297.30px;width:64.9px;text-align:right">5</div>
<div class="cell" style="left:94.5px;top:297.30px;width:75.0px">80T</div>
<div class="cell" style="left:171.5px;top:297.30px;width:137.5px">5401513/54026</div>
<div class="cell" style="left:267px;top:297.30px;width:95.9px;text-align:right">430</div>
<div class="cell" style="left:364.5px;top:297.30px;width:95.9px;text-align:right">440</div>
<div class="cell" style="left:462px;top:297.30px;width:82.4px;text-align:right">102.33<span class="pc">%</span></div>
<div class="cell" style="left:548px;top:297.30px;width:95.5px">5401513/54026</div>
<div class="cell" style="left:643.5px;top:297.30px;width:95.9px;text-align:right">430</div>
<div class="cell" style="left:741px;top:297.30px;width:95.4px;text-align:right">429</div>
<div class="cell" style="left:838px;top:297.30px;width:82.4px;text-align:right">99.77<span class="pc">%</span></div>
<div class="cell" style="left:26px;top:315.00px;width:64.9px;text-align:right">6</div>
<div class="cell" style="left:94.5px;top:315.00px;width:75.0px">63T</div>
<div class="cell" style="left:171.5px;top:315.00px;width:137.5px">8401101-K01</div>
<div class="cell" style="left:267px;top:315.00px;width:95.9px;text-align:right">500</div>
<div class="cell" style="left:364.5px;top:315.00px;width:95.9px;text-align:right">519</div>
<div class="cell" style="left:462px;top:315.00px;width:82.4px;text-align:right">103.80<span class="pc">%</span></div>
<div class="cell" style="left:548px;top:315.00px;width:95.5px">8401101-K01</div>
<div class="cell" style="left:643.5px;top:315.00px;width:95.9px;text-align:right">500</div>
<div class="cell" style="left:741px;top:315.00px;width:95.4px;text-align:right">500</div>
<div class="cell" style="left:838px;top:315.00px;width:82.4px;text-align:right">100.00<span class="pc">%</span></div>
<div class="cell cj" style="left:28.5px;top:331.70px;width:66.5px;color:#111">汇总</div>
<div class="cell" style="left:267px;top:332.70px;width:95.9px;text-align:right;font-weight:bold">1190</div>
<div class="cell" style="left:364.5px;top:332.70px;width:95.9px;text-align:right;font-weight:bold">1201</div>
<div class="cell" style="left:462px;top:332.70px;width:82.4px;text-align:right;font-weight:bold">87.80<span class="pc">%</span></div>
<div class="abs" style="left:95.0px;top:224.00px;width:72.0px;height:300px;background:rgba(60,60,60,0.28)"></div>
<div class="abs" style="left:91.9px;top:205.30px;width:79.0px;height:300px;border:2.2px solid #217346;border-bottom:none"></div>
<div class="abs" style="left:94.5px;top:208.30px;width:74.0px;height:15.7px;border:1px solid #fff;border-bottom:none"></div>
<div class="abs" style="left:166.3px;top:205.30px;width:5.4px;height:5.2px;background:#217346;border-left:1px solid #fff;border-bottom:1px solid #fff"></div>
<div class="abs" style="left:25px;top:206.30px;width:2px;height:300px;background:#217346"></div>
</body></html>
